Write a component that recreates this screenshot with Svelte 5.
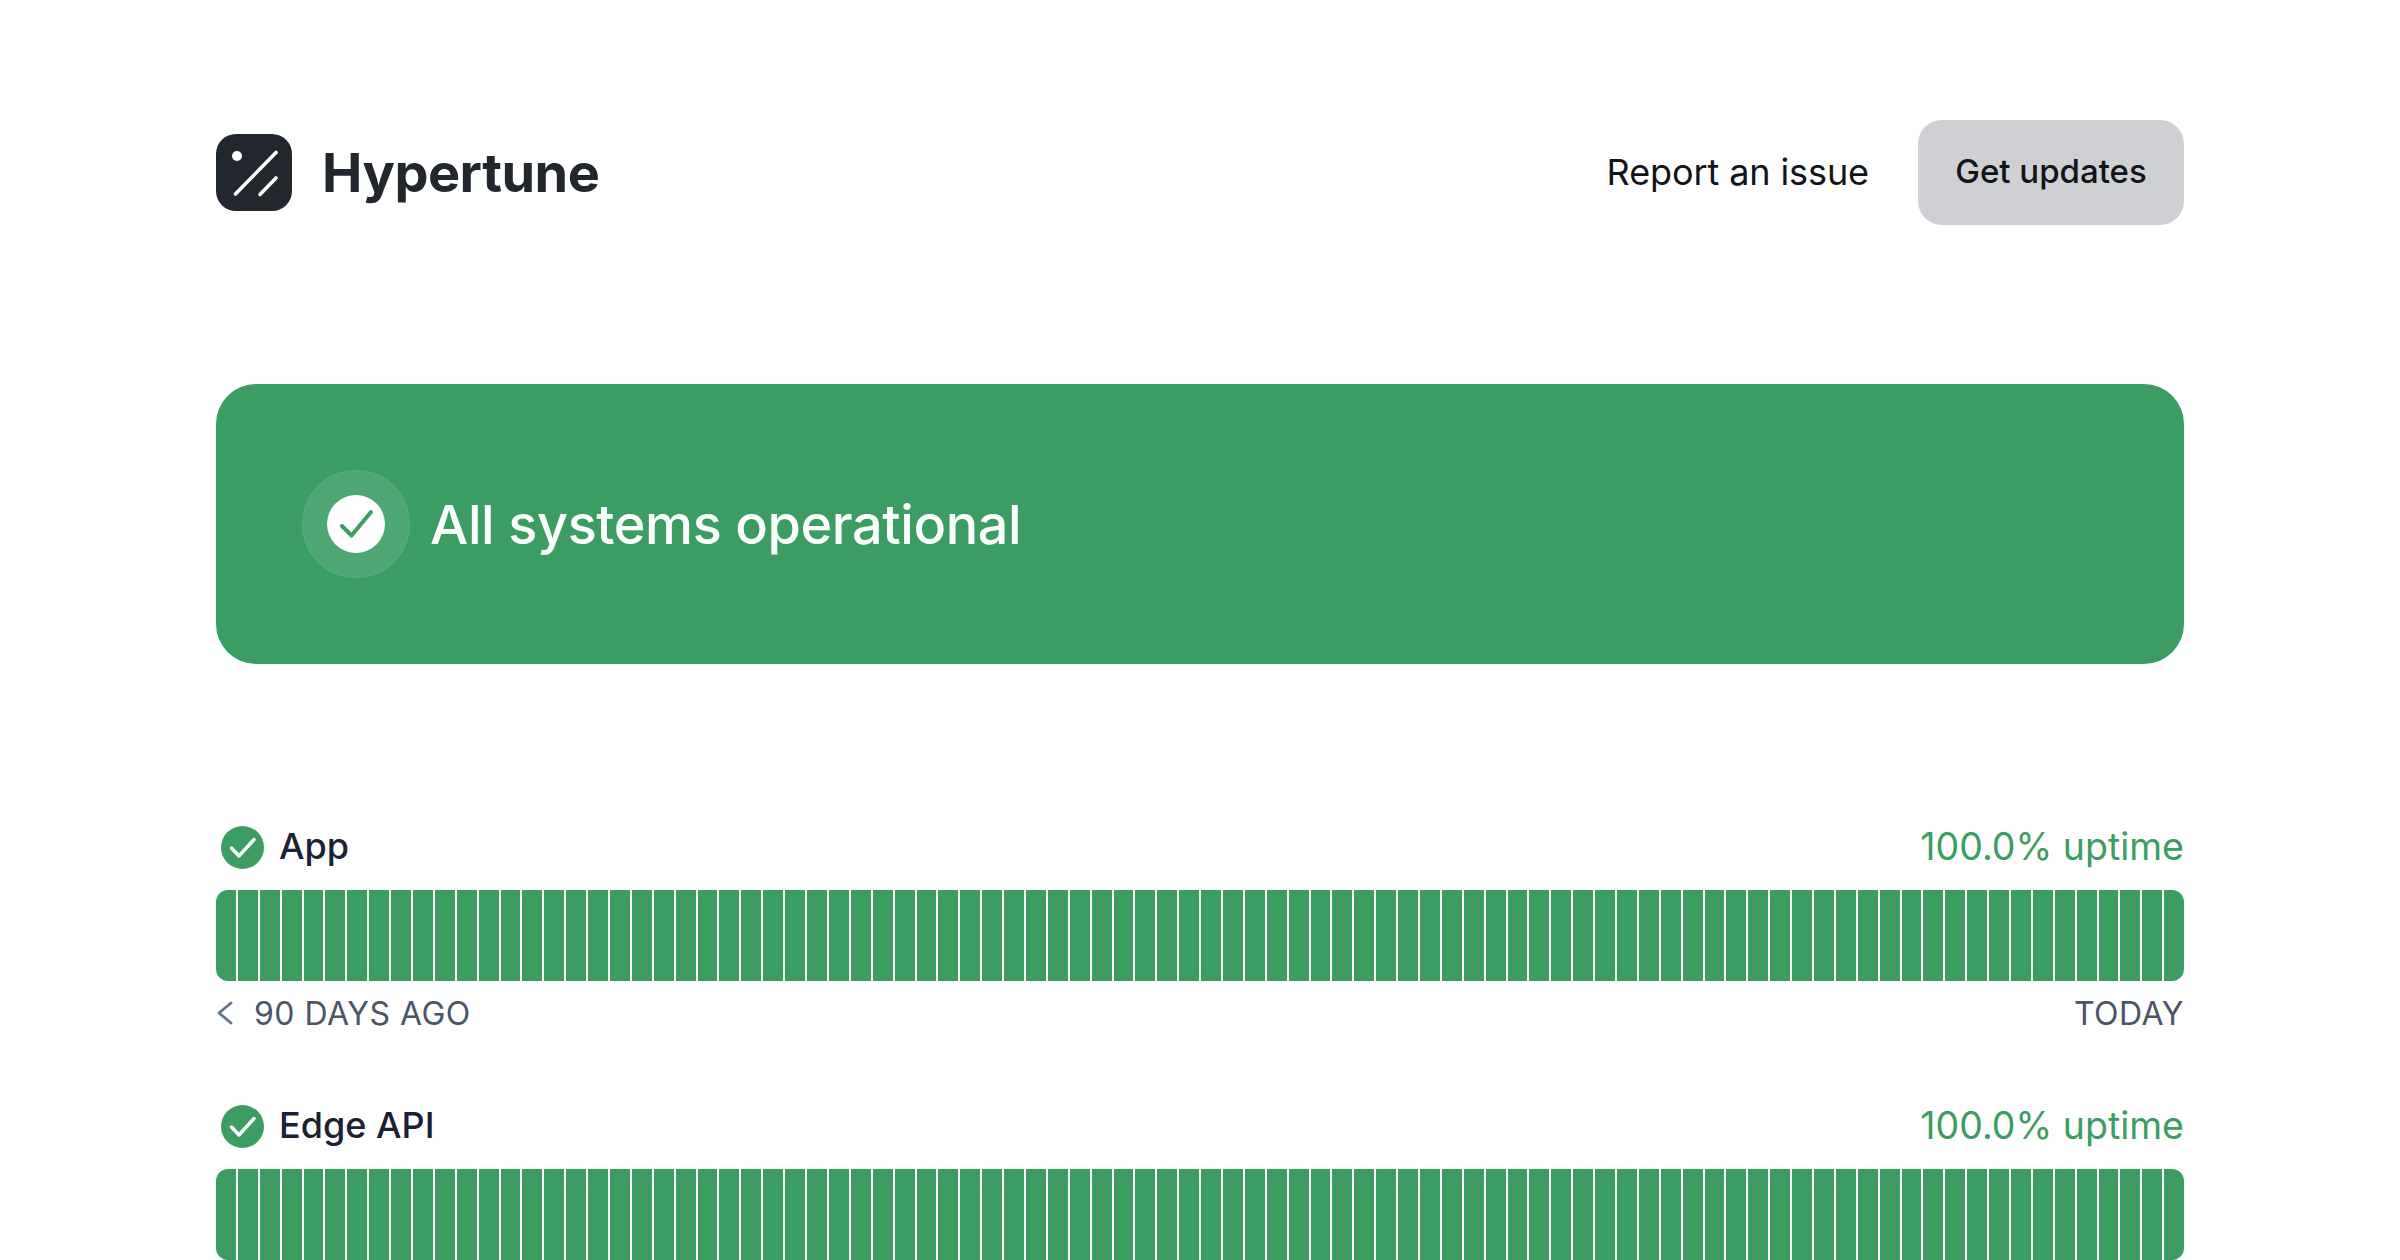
<script>
  const services = [
    { name: "App", uptime: "100.0% uptime", legend: true },
    { name: "Edge API", uptime: "100.0% uptime", legend: false },
  ];
  const days = Array.from({ length: 90 }, (_, i) => i);
</script>

<div class="page">
  <header class="top">
    <div class="brand">
      <svg class="logo" width="76" height="77" viewBox="0 0 76 77" xmlns="http://www.w3.org/2000/svg">
        <rect width="76" height="77" rx="20" fill="#22262d" />
        <circle cx="21" cy="22" r="5" fill="#fff" />
        <path d="M19.500 60 L60 18.500 M44 60.500 L60 44" stroke="#fff" stroke-width="3.600" stroke-linecap="round" fill="none" />
      </svg>
      <span class="brand_name">Hypertune</span>
    </div>
    <nav class="nav">
      <span class="report">Report an issue</span>
      <button class="updates" type="button">Get updates</button>
    </nav>
  </header>

  <section class="banner">
    <div class="halo">
      <svg width="58" height="58" viewBox="0 0 58 58" xmlns="http://www.w3.org/2000/svg">
        <circle cx="29" cy="29" r="29" fill="#fff" />
        <path d="M15 31 L24.500 40.500 L44 17" stroke="#3c9d62" stroke-width="4" stroke-linecap="round" stroke-linejoin="round" fill="none" />
      </svg>
    </div>
    <h1>All systems operational</h1>
  </section>

  <div class="services">
    {#each services as service}
      <section class="service">
        <div class="service_head">
          <div class="service_name">
            <svg width="43" height="43" viewBox="0 0 43 43" xmlns="http://www.w3.org/2000/svg">
              <circle cx="21.500" cy="21.500" r="21.500" fill="#3c9d62" />
              <path d="M10.500 22 L18 30 L33 13.500" stroke="#fff" stroke-width="3.400" stroke-linecap="round" stroke-linejoin="round" fill="none" />
            </svg>
            <span class="label">{service.name}</span>
          </div>
          <span class="uptime label">{service.uptime}</span>
        </div>
        <div class="bars">
          {#each days as day (day)}
            <div class="bar"></div>
          {/each}
        </div>
        {#if service.legend}
          <div class="legend">
            <span class="legend_left">
              <svg width="18" height="26" viewBox="0 0 18 26" xmlns="http://www.w3.org/2000/svg">
                <path d="M15 3 L3 13 L15 23" stroke="#64748b" stroke-width="2.800" stroke-linecap="round" stroke-linejoin="round" fill="none" />
              </svg>
              90 DAYS AGO
            </span>
            <span>TODAY</span>
          </div>
        {/if}
      </section>
    {/each}
  </div>
</div>

<style>
  :global(body) {
    background: #fff;
    overflow: hidden;
  }
  .page {
    width: 1968px;
    margin: 0 auto;
    padding-top: 120px;
    font-family: Inter, "Liberation Sans", sans-serif;
  }
  .top {
    display: flex;
    justify-content: space-between;
    align-items: center;
    height: 105px;
  }
  .brand {
    display: flex;
    align-items: center;
    gap: 30px;
  }
  .brand_name {
    font-size: 54px;
    font-weight: 700;
    letter-spacing: -0.5px;
    color: #22262d;
  }
  .nav {
    display: flex;
    align-items: center;
    gap: 49px;
  }
  .report {
    padding-bottom: 2px;
    font-size: 36px;
    letter-spacing: -0.1px;
    color: #111418;
  }
  .updates {
    width: 266px;
    height: 105px;
    padding-bottom: 4px;
    border: none;
    border-radius: 24px;
    background: #cfd0d4;
    color: #111418;
    font-family: inherit;
    font-size: 33px;
    font-weight: 500;
  }
  .banner {
    display: flex;
    align-items: center;
    gap: 20px;
    height: 280px;
    margin-top: 159px;
    padding-left: 86px;
    border-radius: 40px;
    background: #3c9d62;
  }
  .halo {
    display: flex;
    align-items: center;
    justify-content: center;
    width: 108px;
    height: 108px;
    border-radius: 50%;
    background: #4fa773;
    box-shadow: inset 0 0 0 1px #58ab7a;
  }
  .banner h1 {
    margin: 0;
    font-size: 54px;
    font-weight: 500;
    letter-spacing: -0.4px;
    color: #fff;
  }
  .services {
    display: flex;
    flex-direction: column;
    gap: 68px;
    margin-top: 160px;
  }
  .service_head {
    display: flex;
    justify-content: space-between;
    align-items: center;
    height: 46px;
  }
  .service_name {
    display: flex;
    align-items: center;
    gap: 15px;
    padding-left: 5px;
    font-size: 36px;
    font-weight: 500;
    color: #1a2035;
  }
  .label {
    padding-bottom: 2px;
  }
  .uptime {
    font-size: 37.5px;
    font-weight: 400;
    color: #3c9d62;
  }
  .bars {
    display: flex;
    gap: 2px;
    height: 91px;
    margin-top: 20px;
    border-radius: 12px;
    overflow: hidden;
  }
  .bar {
    flex: 1;
    background: #3c9d62;
  }
  .legend {
    display: flex;
    justify-content: space-between;
    align-items: center;
    height: 44px;
    margin-top: 10px;
    font-size: 32px;
    letter-spacing: 0.5px;
    color: #4a5568;
  }
  .legend_left {
    display: flex;
    align-items: center;
    gap: 20px;
  }
</style>
